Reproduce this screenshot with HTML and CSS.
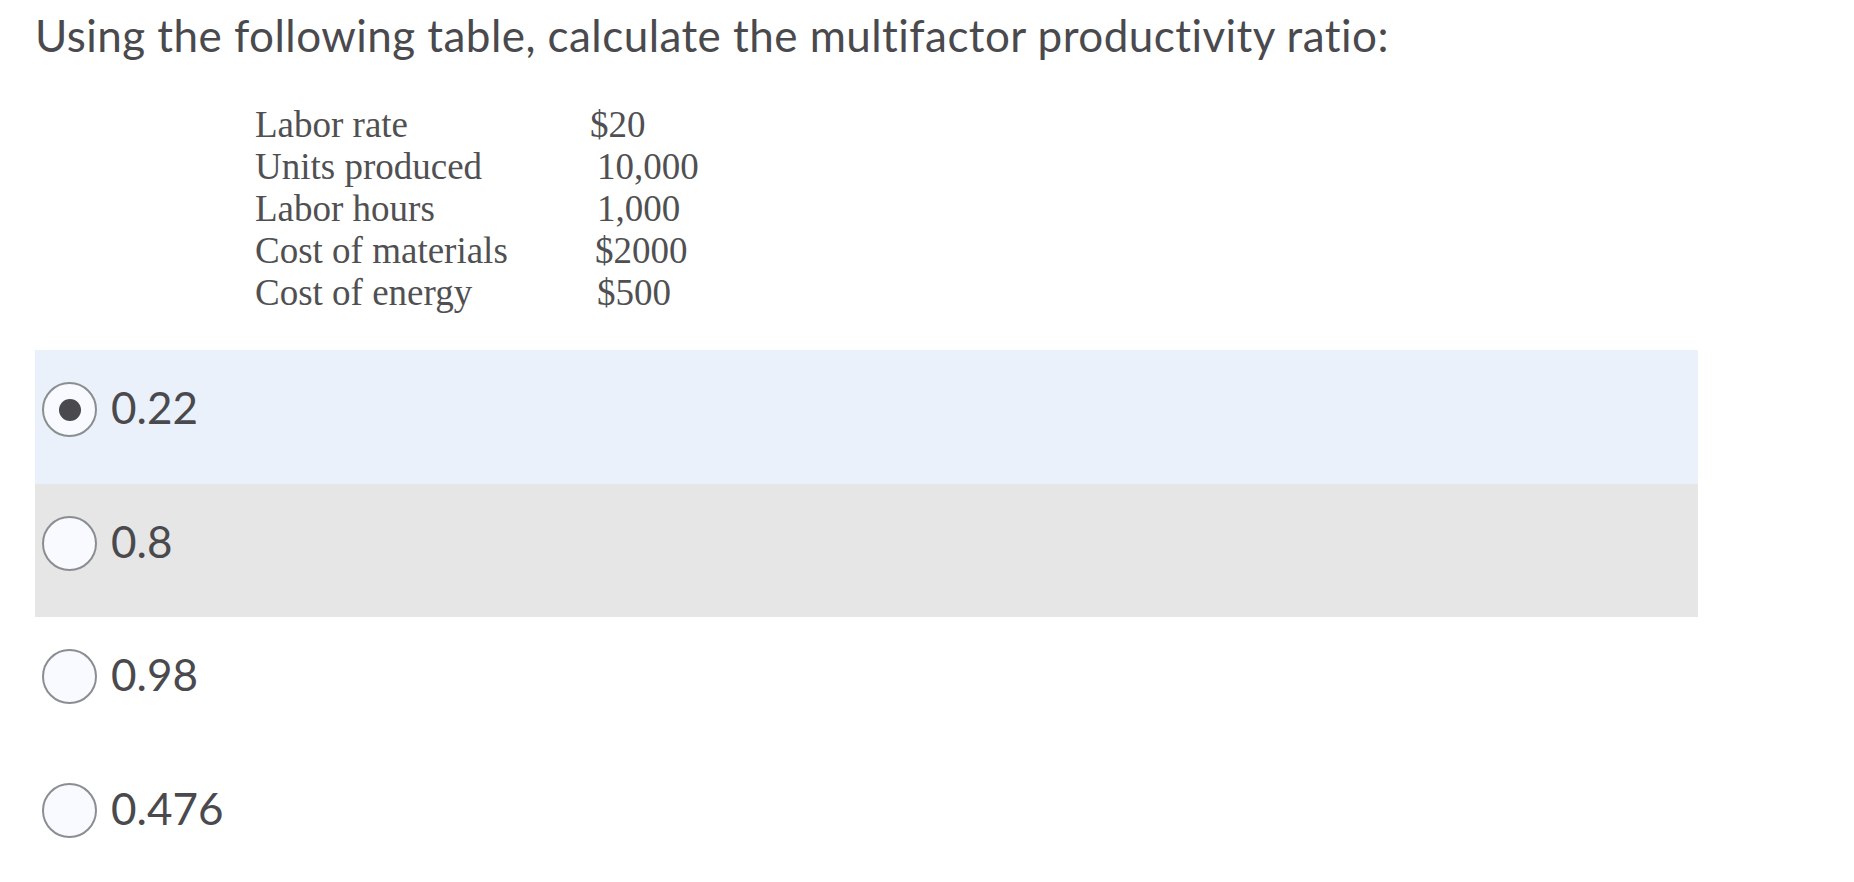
FILE: index.html
```html
<!DOCTYPE html>
<html lang="en">
<head>
<meta charset="utf-8">
<title>Multifactor productivity</title>
<link rel="stylesheet" href="styles.css">
</head>
<body>
<div class="question">
  <h1 class="prompt">Using the following table, calculate the multifactor productivity ratio:</h1>
  <div class="data">
    <div class="lbl">Labor rate</div><div class="val">$20</div>
    <div class="lbl">Units produced</div><div class="val ind-a">10,000</div>
    <div class="lbl">Labor hours</div><div class="val ind-a">1,000</div>
    <div class="lbl">Cost of materials</div><div class="val ind-b">$2000</div>
    <div class="lbl">Cost of energy</div><div class="val ind-a">$500</div>
  </div>
  <div class="answers">
    <label class="answer selected"><input class="radio" type="radio" name="a" checked><span class="text">0.22</span></label>
    <label class="answer hover"><input class="radio" type="radio" name="a"><span class="text">0.8</span></label>
    <label class="answer"><input class="radio" type="radio" name="a"><span class="text">0.98</span></label>
    <label class="answer"><input class="radio" type="radio" name="a"><span class="text">0.476</span></label>
  </div>
</div>
</body>
</html>
```
FILE: styles.css
```css
html, body {
  margin: 0;
  padding: 0;
  background: #ffffff;
}

.question {
  padding: 9px 0 0 35px;
  width: 1663px;
  color: #4a4a4e;
}

.prompt {
  margin: 0;
  font-family: Lato, "Open Sans", sans-serif;
  font-weight: 400;
  font-size: 44px;
  letter-spacing: 0.45px;
  line-height: 52px;
  color: #4a4a4e;
}

.data {
  display: grid;
  grid-template-columns: 335px auto;
  justify-content: start;
  margin: 43px 0 0 220px;
  font-family: "Liberation Serif", "Times New Roman", serif;
  font-size: 37px;
  line-height: 42px;
  color: #505052;
}

.val.ind-a { padding-left: 7px; }
.val.ind-b { padding-left: 5px; }

.answers {
  margin-top: 36px;
  display: flex;
  flex-direction: column;
}

.answer {
  display: flex;
  align-items: flex-start;
  box-sizing: border-box;
  height: 133.5px;
  padding: 31px 0 0 7px;
  font-family: Lato, "Open Sans", sans-serif;
  font-size: 44px;
  line-height: 52px;
  color: #4a4a4e;
}

.answer.selected { background: #eaf1fb; }
.answer.hover { background: #e6e6e6; }

.radio {
  appearance: none;
  -webkit-appearance: none;
  margin: 1px 0 0 0;
  box-sizing: border-box;
  width: 55px;
  height: 55px;
  border: 2px solid #8a8e91;
  border-radius: 50%;
  background: #f8faff;
  display: flex;
  align-items: center;
  justify-content: center;
  flex: none;
}

.radio:checked::after {
  content: "";
  width: 22px;
  height: 22px;
  border-radius: 50%;
  background: #4a4a4e;
}

.text {
  margin-left: 14px;
}
```
